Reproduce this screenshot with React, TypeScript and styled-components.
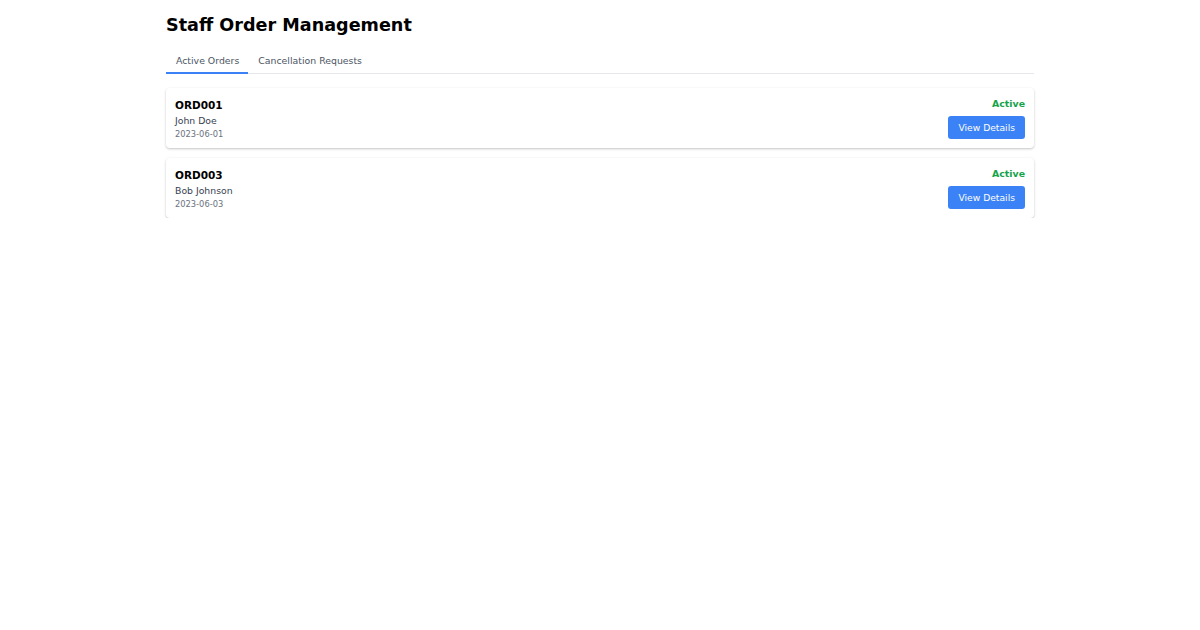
import React, { FunctionComponent, useState } from 'react';
import styled, { createGlobalStyle } from 'styled-components';

const GlobalStyle = createGlobalStyle`
  body {
    margin: 0;
    background: #ffffff;
    font-family: "DejaVu Sans", sans-serif;
    color: #000000;
  }
`;

type Order = {
  id: string;
  customer: string;
  date: string;
  status: string;
};

const orders: Order[] = [
  { id: 'ORD001', customer: 'John Doe', date: '2023-06-01', status: 'Active' },
  { id: 'ORD003', customer: 'Bob Johnson', date: '2023-06-03', status: 'Active' },
];

const Page = styled.div`
  max-width: 868px;
  margin: 0 auto;
  padding-top: 13px;
`;

const Title = styled.h1`
  margin: 0 0 14px;
  font-size: 17.6px;
  line-height: 24px;
  font-weight: bold;
`;

const Tabs = styled.div`
  display: flex;
  border-bottom: 1px solid #e5e7eb;
  margin-bottom: 14px;
`;

const Tab = styled.button<{ $active?: boolean }>`
  background: none;
  border: none;
  border-bottom: 2px solid ${props => (props.$active ? '#3b82f6' : 'transparent')};
  margin-bottom: -1px;
  padding: 3px 9px 5px 10px;
  font-family: inherit;
  font-size: 9.35px;
  line-height: 13px;
  color: #4b5563;
  cursor: pointer;
`;

const List = styled.div`
  display: flex;
  flex-direction: column;
  gap: 10px;
`;

const Card = styled.div`
  display: flex;
  justify-content: space-between;
  align-items: center;
  height: 60px;
  box-sizing: border-box;
  padding: 0 9px;
  background: #ffffff;
  border-radius: 4px;
  box-shadow: 0 1px 3px rgba(0, 0, 0, 0.14), 0 1px 2px rgba(0, 0, 0, 0.1);
`;

const Info = styled.div`
  display: flex;
  flex-direction: column;
  padding-top: 2px;
`;

const OrderId = styled.div`
  font-size: 10.5px;
  font-weight: bold;
  line-height: 16px;
`;

const Customer = styled.div`
  font-size: 9.3px;
  line-height: 15px;
  color: #374151;
`;

const OrderDate = styled.div`
  font-size: 8.3px;
  line-height: 13px;
  color: #6b7280;
`;

const Side = styled.div`
  display: flex;
  flex-direction: column;
  align-items: flex-end;
  gap: 5px;
`;

const Status = styled.div`
  font-size: 9.4px;
  font-weight: bold;
  color: #16a34a;
  line-height: 14px;
`;

const DetailsButton = styled.button`
  background: #3b82f6;
  color: #ffffff;
  border: none;
  border-radius: 3px;
  height: 23px;
  padding: 0 10px;
  font-family: inherit;
  font-size: 9.2px;
  cursor: pointer;
`;

const App: FunctionComponent = () => {
  const [tab, setTab] = useState('active');

  return (
    <Page>
      <GlobalStyle />
      <Title>Staff Order Management</Title>
      <Tabs>
        <Tab $active={tab === 'active'} onClick={() => setTab('active')}>Active Orders</Tab>
        <Tab $active={tab === 'cancel'} onClick={() => setTab('cancel')}>Cancellation Requests</Tab>
      </Tabs>
      {tab === 'active' && (
        <List>
          {orders.map(order => (
            <Card key={order.id}>
              <Info>
                <OrderId>{order.id}</OrderId>
                <Customer>{order.customer}</Customer>
                <OrderDate>{order.date}</OrderDate>
              </Info>
              <Side>
                <Status>{order.status}</Status>
                <DetailsButton>View Details</DetailsButton>
              </Side>
            </Card>
          ))}
        </List>
      )}
    </Page>
  );
};

export default App;
